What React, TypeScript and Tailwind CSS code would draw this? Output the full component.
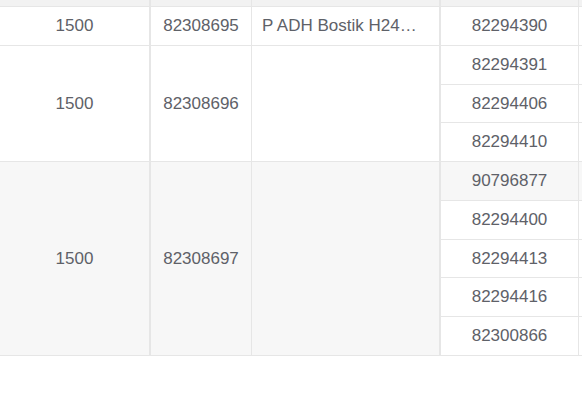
const groups = [
  { qty: "1500", order: "82308695", name: "P ADH Bostik H24WW Universal", codes: ["82294390"], hover: false },
  { qty: "1500", order: "82308696", name: "", codes: ["82294391", "82294406", "82294410"], hover: false },
  { qty: "1500", order: "82308697", name: "", codes: ["90796877", "82294400", "82294413", "82294416", "82300866"], hover: true },
];

export default function App() {
  return (
    <div
      className="w-[582px] h-[412px] overflow-hidden bg-white text-[17px] text-[#5e6168]"
      style={{ fontFamily: "'Liberation Sans', Arial, sans-serif" }}
    >
      {/* header strip */}
      <div className="flex h-[7px] bg-[#f2f2f2] border-b border-[#e6e6e6]">
        <div className="w-[151px] shrink-0 border-r-2 border-[#e6e6e6]" />
        <div className="w-[101px] shrink-0 border-r border-[#e6e6e6]" />
        <div className="w-[189px] shrink-0 border-r-2 border-[#e6e6e6]" />
        <div className="w-[138px] shrink-0 border-r border-[#e6e6e6]" />
      </div>

      {groups.map((g, i) => {
        const bg = g.hover ? "bg-[#f7f7f7]" : "bg-white";
        return (
          <div key={i} className={`flex border-b border-[#e6e6e6] ${bg}`}>
            <div className="w-[151px] shrink-0 flex items-center justify-center border-r-2 border-[#e6e6e6]">
              {g.qty}
            </div>
            <div className="w-[101px] shrink-0 flex items-center justify-center border-r border-[#e6e6e6]">
              {g.order}
            </div>
            <div className="w-[189px] shrink-0 border-r-2 border-[#e6e6e6] px-[10px] flex items-center">
              <span className="block w-full truncate">{g.name}</span>
            </div>
            <div className="flex flex-col">
              {g.codes.map((c, j) => (
                <div
                  key={c}
                  className={`flex ${
                    j < g.codes.length - 1 ? "h-[38.75px] border-b border-[#e6e6e6]" : "h-[37.75px]"
                  } ${g.hover && j === 0 ? "bg-[#f7f7f7]" : "bg-white"}`}
                >
                  <div className="w-[138px] shrink-0 flex items-center justify-center border-r border-[#e6e6e6]">
                    {c}
                  </div>
                  <div className="w-[4px] shrink-0" />
                </div>
              ))}
            </div>
          </div>
        );
      })}
    </div>
  );
}
